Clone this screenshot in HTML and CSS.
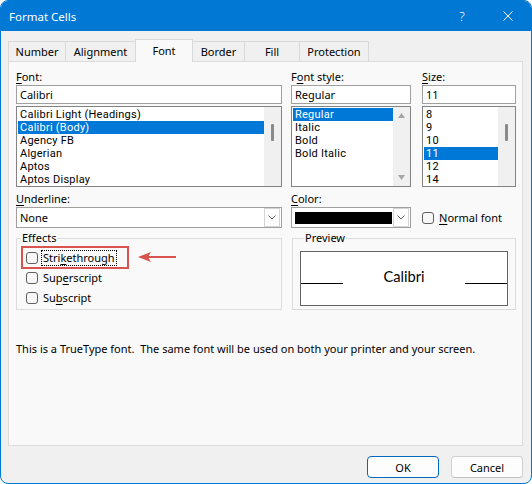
FILE: index.html
```html
<!DOCTYPE html>
<html>
<head>
<meta charset="utf-8">
<title>Format Cells</title>
<link rel="stylesheet" href="styles.css">
</head>
<body>
<div class="window">
  <div class="titlebar">
    <span class="title">Format Cells</span>
    <span class="cap cap-help">?</span>
    <span class="cap cap-close">
      <svg width="10" height="10" viewBox="0 0 10 10"><path d="M0.5 0.5 L9.5 9.5 M9.5 0.5 L0.5 9.5" stroke="#fff" stroke-width="1" fill="none"/></svg>
    </span>
  </div>
  <div class="main">
    <div class="tabs">
      <div class="tab t-number">Number</div>
      <div class="tab t-align">Alignment</div>
      <div class="tab t-font active">Font</div>
      <div class="tab t-border">Border</div>
      <div class="tab t-fill">Fill</div>
      <div class="tab t-prot">Protection</div>
    </div>
    <div class="panel">
      <div class="form">
        <div class="lbl c1"><u>F</u>ont:</div>
        <div class="lbl c2">F<u>o</u>nt style:</div>
        <div class="lbl c3"><u>S</u>ize:</div>

        <div class="input c1">Calibri</div>
        <div class="input c2">Regular</div>
        <div class="input c3">11</div>

        <div class="list c1">
          <div class="items">
            <div class="item">Calibri Light (Headings)</div>
            <div class="item sel">Calibri (Body)</div>
            <div class="item">Agency FB</div>
            <div class="item">Algerian</div>
            <div class="item">Aptos</div>
            <div class="item">Aptos Display</div>
          </div>
          <div class="sb"><div class="thumb"></div></div>
        </div>
        <div class="list c2">
          <div class="items">
            <div class="item sel">Regular</div>
            <div class="item">Italic</div>
            <div class="item">Bold</div>
            <div class="item">Bold Italic</div>
          </div>
          <div class="sb sb-arrows">
            <svg width="7" height="5" viewBox="0 0 7 5"><path d="M3.5 0 L7 5 L0 5 Z" fill="#a6a6a6"/></svg>
            <svg width="7" height="5" viewBox="0 0 7 5"><path d="M0 0 L7 0 L3.5 5 Z" fill="#a6a6a6"/></svg>
          </div>
        </div>
        <div class="list c3">
          <div class="items">
            <div class="item">8</div>
            <div class="item">9</div>
            <div class="item">10</div>
            <div class="item sel">11</div>
            <div class="item">12</div>
            <div class="item">14</div>
          </div>
          <div class="sb"><div class="thumb"></div></div>
        </div>

        <div class="lbl c1"><u>U</u>nderline:</div>
        <div class="lbl c2"><u>C</u>olor:</div>
        <div class="lbl c3"></div>

        <div class="combo c1">
          <span class="combo-text">None</span>
          <span class="combo-btn"><svg width="8" height="5" viewBox="0 0 8 5"><path d="M0.5 0.5 L4 4 L7.5 0.5" stroke="#606060" stroke-width="1" fill="none"/></svg></span>
        </div>
        <div class="combo c2">
          <span class="swatch"></span>
          <span class="combo-btn"><svg width="8" height="5" viewBox="0 0 8 5"><path d="M0.5 0.5 L4 4 L7.5 0.5" stroke="#606060" stroke-width="1" fill="none"/></svg></span>
        </div>
        <div class="check-row c3 normal">
          <span class="cb"></span><span class="cb-label"><u>N</u>ormal font</span>
        </div>

        <fieldset class="group effects">
          <legend>Effects</legend>
          <div class="check-row eff first">
            <span class="cb"></span><span class="cb-label focus">Stri<u>k</u>ethrough</span>
            <span class="mark-box"></span>
            <svg class="mark-arrow" width="40" height="12" viewBox="0 0 40 12"><path d="M2 6 H38" stroke="#d9534f" stroke-width="2" fill="none"/><path d="M0 6 L13 1 L10 6 L13 11 Z" fill="#d9534f"/></svg>
          </div>
          <div class="check-row eff">
            <span class="cb"></span><span class="cb-label">Sup<u>e</u>rscript</span>
          </div>
          <div class="check-row eff">
            <span class="cb"></span><span class="cb-label">Su<u>b</u>script</span>
          </div>
        </fieldset>

        <fieldset class="group preview">
          <legend>Preview</legend>
          <div class="pv-box">
            <span class="pv-line"></span>
            <span class="pv-text">Calibri</span>
            <span class="pv-line"></span>
          </div>
        </fieldset>
      </div>
      <p class="info">This is a TrueType font.  The same font will be used on both your printer and your screen.</p>
    </div>
  </div>
  <div class="footer">
    <button class="btn ok">OK</button>
    <button class="btn">Cancel</button>
  </div>
</div>
</body>
</html>
```
FILE: styles.css
```css
body {
  margin: 0;
  background: #ffffff;
  font-family: "Noto Sans", "Open Sans", sans-serif;
  font-size: 11px;
  color: #000;
}
u { text-decoration-thickness: 1px; text-underline-offset: 2px; }

.window {
  width: 532px;
  height: 484px;
  box-sizing: border-box;
  border: 1px solid #0078d4;
  border-radius: 8px;
  overflow: hidden;
  background: #f0f0f0;
  display: flex;
  flex-direction: column;
}

/* title bar */
.titlebar {
  height: 30px;
  flex: none;
  background: #0078d4;
  color: #fff;
  display: flex;
  align-items: center;
}
.title { padding-left: 8px; font-size: 11.5px; }
.cap {
  width: 46px;
  height: 30px;
  display: flex;
  align-items: center;
  justify-content: center;
}
.cap-help { margin-left: auto; font-size: 13px; font-weight: 300; }

/* main area */
.main {
  flex: 1;
  display: flex;
  flex-direction: column;
  padding: 0 8px 0 7px;
  min-height: 0;
}
.tabs {
  height: 30px;
  flex: none;
  display: flex;
  align-items: flex-end;
}
.tab {
  height: 20px;
  box-sizing: border-box;
  border: 1px solid #d9d9d9;
  border-bottom: none;
  margin-left: -1px;
  display: flex;
  align-items: center;
  justify-content: center;
  background: #f0f0f0;
}
.tab:first-child { margin-left: 0; }
.tab.active {
  height: 23px;
  margin-bottom: -1px;
  padding-bottom: 2px;
  background: #f9f9f9;
  position: relative;
  z-index: 1;
}
.t-number { width: 58px; }
.t-align { width: 71px; }
.t-font { width: 58px; }
.t-border { width: 53px; }
.t-fill { width: 56px; }
.t-prot { width: 70px; }

.panel {
  flex: 1;
  background: #f9f9f9;
  border: 1px solid #dcdcdc;
  padding: 7px 0 0 7px;
  display: flex;
  flex-direction: column;
}

.form {
  display: grid;
  grid-template-columns: 275px 131px 94px;
  grid-template-rows: 16px 21px 85px 16px 21px auto;
}
.c1 { width: 266px; }
.c2 { width: 120px; }
.c3 { width: 94px; }

.lbl { line-height: 16px; white-space: nowrap; }

.input {
  height: 19px;
  box-sizing: border-box;
  border: 1px solid #a0a0a0;
  background: #fff;
  padding-left: 3px;
  line-height: 17px;
}

.list {
  height: 81px;
  box-sizing: border-box;
  border: 1px solid #838383;
  background: #fff;
  display: flex;
}
.items {
  flex: 1;
  padding: 1px 0 0 1px;
  overflow: hidden;
}
.item {
  height: 13px;
  line-height: 13px;
  padding-left: 2px;
  white-space: nowrap;
  font-family: Roboto, "Noto Sans", sans-serif;
  font-size: 11px;
  letter-spacing: 0.25px;
}
.item.sel { background: #0078d7; color: #fff; }
.sb {
  width: 17px;
  flex: none;
  background: #f0f0f0;
  display: flex;
  flex-direction: column;
  align-items: center;
}
.thumb {
  width: 3px;
  height: 17px;
  margin-top: 17px;
  background: #8a8a8a;
  border-radius: 1px;
}
.sb-arrows {
  justify-content: space-between;
  padding: 6px 0;
  box-sizing: border-box;
}
.sb-arrows svg { display: block; }

.combo {
  height: 21px;
  box-sizing: border-box;
  border: 1px solid #a0a0a0;
  background: #fff;
  display: flex;
  align-items: center;
}
.combo-text { flex: 1; padding-left: 3px; line-height: 19px; }
.combo-btn {
  width: 16px;
  height: 19px;
  box-sizing: border-box;
  border: 1px solid #d4d4d4;
  margin-left: auto;
  margin-right: 1px;
  display: flex;
  align-items: center;
  justify-content: center;
}
.combo-btn svg { display: block; }
.swatch {
  width: 97px;
  height: 12px;
  margin-left: 3px;
  background: #000;
}

.check-row {
  display: flex;
  align-items: center;
}
.cb {
  width: 12px;
  height: 12px;
  box-sizing: border-box;
  border: 1px solid #5f5f5f;
  border-radius: 3px;
  background: #f7f7f7;
  flex: none;
}
.cb-label { margin-left: 5px; line-height: 14px; white-space: nowrap; }
.normal { height: 21px; }

.group {
  margin: 3px 0 0;
  border: 1px solid #dcdcdc;
  min-width: 0;
  box-sizing: border-box;
}
.group legend {
  padding: 0 1px;
  margin-left: 4px;
  line-height: 14px;
}
.effects {
  width: 266px;
  padding: 3px 0 1px 0;
}
.eff {
  height: 20px;
  padding-left: 9px;
  position: relative;
}
.cb-label.focus {
  margin-left: 3px;
  padding: 0 1px;
  border: 1px dotted #000;
}
.mark-box {
  position: absolute;
  left: 4px;
  top: -2px;
  width: 108px;
  height: 23px;
  box-sizing: border-box;
  border: 2px solid #d9534f;
}
.mark-arrow {
  position: absolute;
  left: 121px;
  top: 3px;
}

.preview {
  grid-column: 2 / 4;
  width: 224px;
  margin-left: 1px;
  padding: 6px 0 2px 7px;
}
.pv-box {
  width: 208px;
  height: 55px;
  box-sizing: border-box;
  border: 1px solid #646464;
  background: #fff;
  display: flex;
  align-items: flex-start;
}
.pv-line {
  width: 42px;
  height: 32px;
  box-sizing: border-box;
  border-bottom: 1px solid #000;
  flex: none;
}
.pv-text {
  flex: 1;
  text-align: center;
  margin-top: 16px;
  line-height: 18px;
  font-family: Lato, "Noto Sans", sans-serif;
  font-size: 14.67px;
}

.info {
  margin: 31px 0 0;
  line-height: 16px;
  white-space: pre;
}

.footer {
  height: 37px;
  flex: none;
  display: flex;
  justify-content: flex-end;
  align-items: flex-start;
  gap: 12px;
  padding: 10px 8px 0 0;
  box-sizing: border-box;
}
.btn {
  width: 72px;
  height: 22px;
  box-sizing: border-box;
  border: 1px solid #d0d0d0;
  border-bottom-color: #c2c2c2;
  border-radius: 4px;
  background: #fdfdfd;
  font: inherit;
  color: #000;
  padding: 0;
}
.btn.ok { border-color: #0067c0; }
```
